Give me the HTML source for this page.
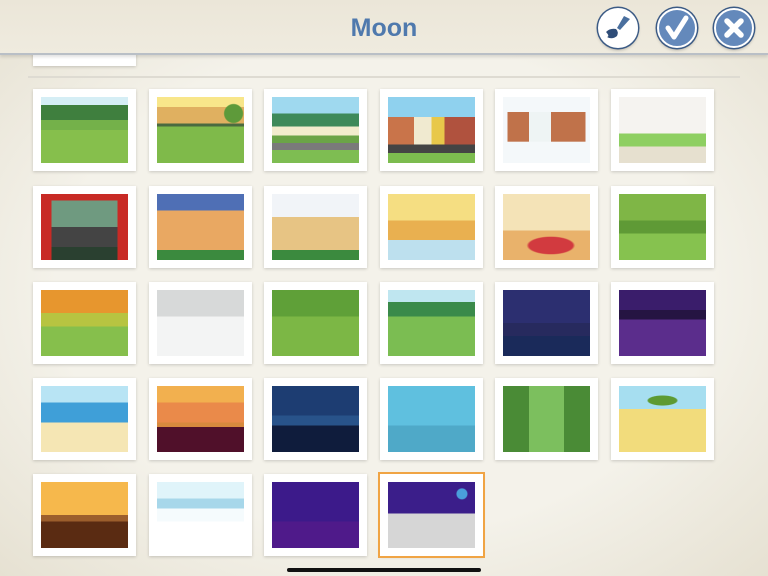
<!DOCTYPE html>
<html><head><meta charset="utf-8"><style>
*{margin:0;padding:0;box-sizing:border-box}
body{width:768px;height:576px;overflow:hidden;position:relative;font-family:"Liberation Sans",sans-serif;
background:radial-gradient(ellipse at center,#f4f2ea 60%,#e6e1d2 100%);}
.hdr{position:absolute;left:0;top:0;width:768px;height:55px;background:linear-gradient(#ebe6d8,#efebdf);border-bottom:2px solid #b9bfc6;box-shadow:0 2px 3px rgba(0,0,0,.12)}
.title{position:absolute;left:0;width:768px;top:14px;text-align:center;font-size:25px;font-weight:bold;color:#4f79ad}
.btn{position:absolute;top:8px;width:40px;height:40px;border-radius:50%;background:#6489bb;border:2px solid #fff;box-shadow:0 0 0 1.5px #3c5b85,0 2px 3px rgba(0,0,0,.3)}
.line{position:absolute;left:28px;top:76px;width:712px;height:2px;background:#dedbd2}
.card{position:absolute;width:103px;height:82px;background:#fff;box-shadow:0 1px 3px rgba(0,0,0,.18);padding:8px}
.card div{width:87px;height:66px}
.sel{outline:2px solid #f0a444}
.home{position:absolute;left:287px;top:568px;width:194px;height:4px;border-radius:2px;background:#111}
</style></head><body>
<div class="card" style="left:33px;top:40px;height:26px"></div>
<div class="hdr"></div>
<div class="title">Moon</div>
<div class="btn" style="left:598px;background:#fff">
<svg width="36" height="36" viewBox="0 0 36 36"><path d="M24 6 L30 9 L20 20 L17 18Z" fill="#4a6f9e"/><path d="M6 22 Q10 18 16 19 Q19 22 17 26 Q12 30 7 27 Q10 26 6 22Z" fill="#2f4d78"/></svg></div>
<div class="btn" style="left:657px"><svg width="36" height="36" viewBox="0 0 36 36"><path d="M9 18 L15 27 L27 8" stroke="#fff" stroke-width="5" fill="none" stroke-linecap="round" stroke-linejoin="round"/></svg></div>
<div class="btn" style="left:714px"><svg width="36" height="36" viewBox="0 0 36 36"><path d="M11 11 L25 25 M25 11 L11 25" stroke="#fff" stroke-width="5.5" stroke-linecap="round"/></svg></div>
<div class="line"></div>

<!-- row1 -->
<div class="card" style="left:33px;top:89px"><div style="background:linear-gradient(#d5eef5 0 12%,#3f7f3e 12% 35%,#74b14a 35% 50%,#86bf4c 50%)"></div></div>
<div class="card" style="left:149px;top:89px"><div style="background:radial-gradient(circle at 88% 25%,#5e9a3a 9px,transparent 10px),linear-gradient(#f8e68a 0 15%,#e0b060 15% 40%,#4a6a40 40% 45%,#7fba4a 45%)"></div></div>
<div class="card" style="left:264px;top:89px"><div style="background:linear-gradient(#9fd9ef 0 25%,#3e8a5a 25% 45%,#f2eccd 45% 58%,#6ba447 58% 70%,#7a7a7a 70% 80%,#7ebd52 80%)"></div></div>
<div class="card" style="left:380px;top:89px"><div style="background:linear-gradient(90deg,#c9744a 0 30%,#f0ead0 30% 50%,#e8c84a 50% 65%,#b0523e 65%);background-size:100% 45%;background-position:0 55%;background-repeat:no-repeat;background-color:#8fd1ee"><div style="width:87px;height:66px;background:linear-gradient(transparent 0 72%,#444 72% 85%,#7cbc4f 85%)"></div></div></div>
<div class="card" style="left:495px;top:89px"><div style="background:linear-gradient(90deg,#f4f7fa 0 5%,#c0724a 5% 30%,#eef4f4 30% 55%,#c0724a 55% 95%,#f4f7fa 95%);background-size:100% 45%;background-repeat:no-repeat;background-position:0 40%;background-color:#f4f8fa"></div></div>
<div class="card" style="left:611px;top:89px"><div style="background:linear-gradient(#f5f3f0 0 55%,#8ecf62 55% 75%,#e6e0cf 75%)"></div></div>
<!-- row2 -->
<div class="card" style="left:33px;top:186px"><div style="background:linear-gradient(90deg,#c82a25 0 12%,transparent 12% 88%,#c82a25 88%),linear-gradient(#c82a25 0 10%,#6f9a80 10% 50%,#444 50% 80%,#2a4030 80%)"></div></div>
<div class="card" style="left:149px;top:186px"><div style="background:linear-gradient(#4f6fb5 0 25%,#e9a862 25% 85%,#3b8a3e 85%)"></div></div>
<div class="card" style="left:264px;top:186px"><div style="background:linear-gradient(#f1f4f8 0 35%,#e7c484 35% 85%,#3b8a3e 85%)"></div></div>
<div class="card" style="left:380px;top:186px"><div style="background:linear-gradient(#f5de82 0 40%,#e9b050 40% 70%,#bde0ee 70%)"></div></div>
<div class="card" style="left:495px;top:186px"><div style="background:radial-gradient(ellipse 28% 14% at 55% 78%,#d23a3f 90%,transparent 100%),linear-gradient(#f4e3b7 0 55%,#e9b26b 55%)"></div></div>
<div class="card" style="left:611px;top:186px"><div style="background:linear-gradient(#7fb646 0 40%,#5f9a36 40% 60%,#86c24f 60%)"></div></div>
<!-- row3 -->
<div class="card" style="left:33px;top:282px"><div style="background:linear-gradient(#e7962e 0 35%,#b7c441 35% 55%,#86bf4c 55%)"></div></div>
<div class="card" style="left:149px;top:282px"><div style="background:linear-gradient(#d7d9d9 0 40%,#f3f4f4 40%)"></div></div>
<div class="card" style="left:264px;top:282px"><div style="background:linear-gradient(#5fa038 0 40%,#7cb745 40%)"></div></div>
<div class="card" style="left:380px;top:282px"><div style="background:linear-gradient(#bfe6f0 0 18%,#3a8a4a 18% 40%,#7bbd52 40%)"></div></div>
<div class="card" style="left:495px;top:282px"><div style="background:linear-gradient(#2c2f70 0 50%,#272a5e 50% 70%,#1a2a5a 70%)"></div></div>
<div class="card" style="left:611px;top:282px"><div style="background:linear-gradient(#3a1d6b 0 30%,#251442 30% 45%,#5b2d8c 45%)"></div></div>
<!-- row4 -->
<div class="card" style="left:33px;top:378px"><div style="background:linear-gradient(#b8e4f4 0 25%,#3f9fd8 25% 55%,#f5e6b4 55%)"></div></div>
<div class="card" style="left:149px;top:378px"><div style="background:linear-gradient(#f2b04f 0 25%,#ea8a4a 25% 55%,#d78a3e 55% 62%,#50102a 62%)"></div></div>
<div class="card" style="left:264px;top:378px"><div style="background:linear-gradient(#1d3d72 0 45%,#28538a 45% 60%,#0f1c3c 60%)"></div></div>
<div class="card" style="left:380px;top:378px"><div style="background:linear-gradient(#5fc0df 0 60%,#4fa9c8 60%)"></div></div>
<div class="card" style="left:495px;top:378px"><div style="background:linear-gradient(90deg,#4a8b36 0 30%,#7cbf5e 30% 70%,#4a8b36 70%)"></div></div>
<div class="card" style="left:611px;top:378px"><div style="background:radial-gradient(ellipse 18% 8% at 50% 22%,#5d9a32 90%,transparent 100%),linear-gradient(#a6def0 0 35%,#f2dc7c 35%)"></div></div>
<!-- row5 -->
<div class="card" style="left:33px;top:474px"><div style="background:linear-gradient(#f6b84c 0 50%,#9c5e2c 50% 60%,#5a2b12 60%)"></div></div>
<div class="card" style="left:149px;top:474px"><div style="background:linear-gradient(#e0f4fa 0 25%,#a7d7ea 25% 40%,#f5fbfd 40% 60%,#fff 60%)"></div></div>
<div class="card" style="left:264px;top:474px"><div style="background:linear-gradient(#3c1a8a 0 60%,#4f1a8a 60%)"></div></div>
<div class="card sel" style="left:380px;top:474px"><div style="background:radial-gradient(circle at 85% 18%,#4a9edb 5px,transparent 6px),linear-gradient(#3b1e8a 0 48%,#d6d6d6 48%)"></div></div>
<div class="home"></div>
</body></html>
